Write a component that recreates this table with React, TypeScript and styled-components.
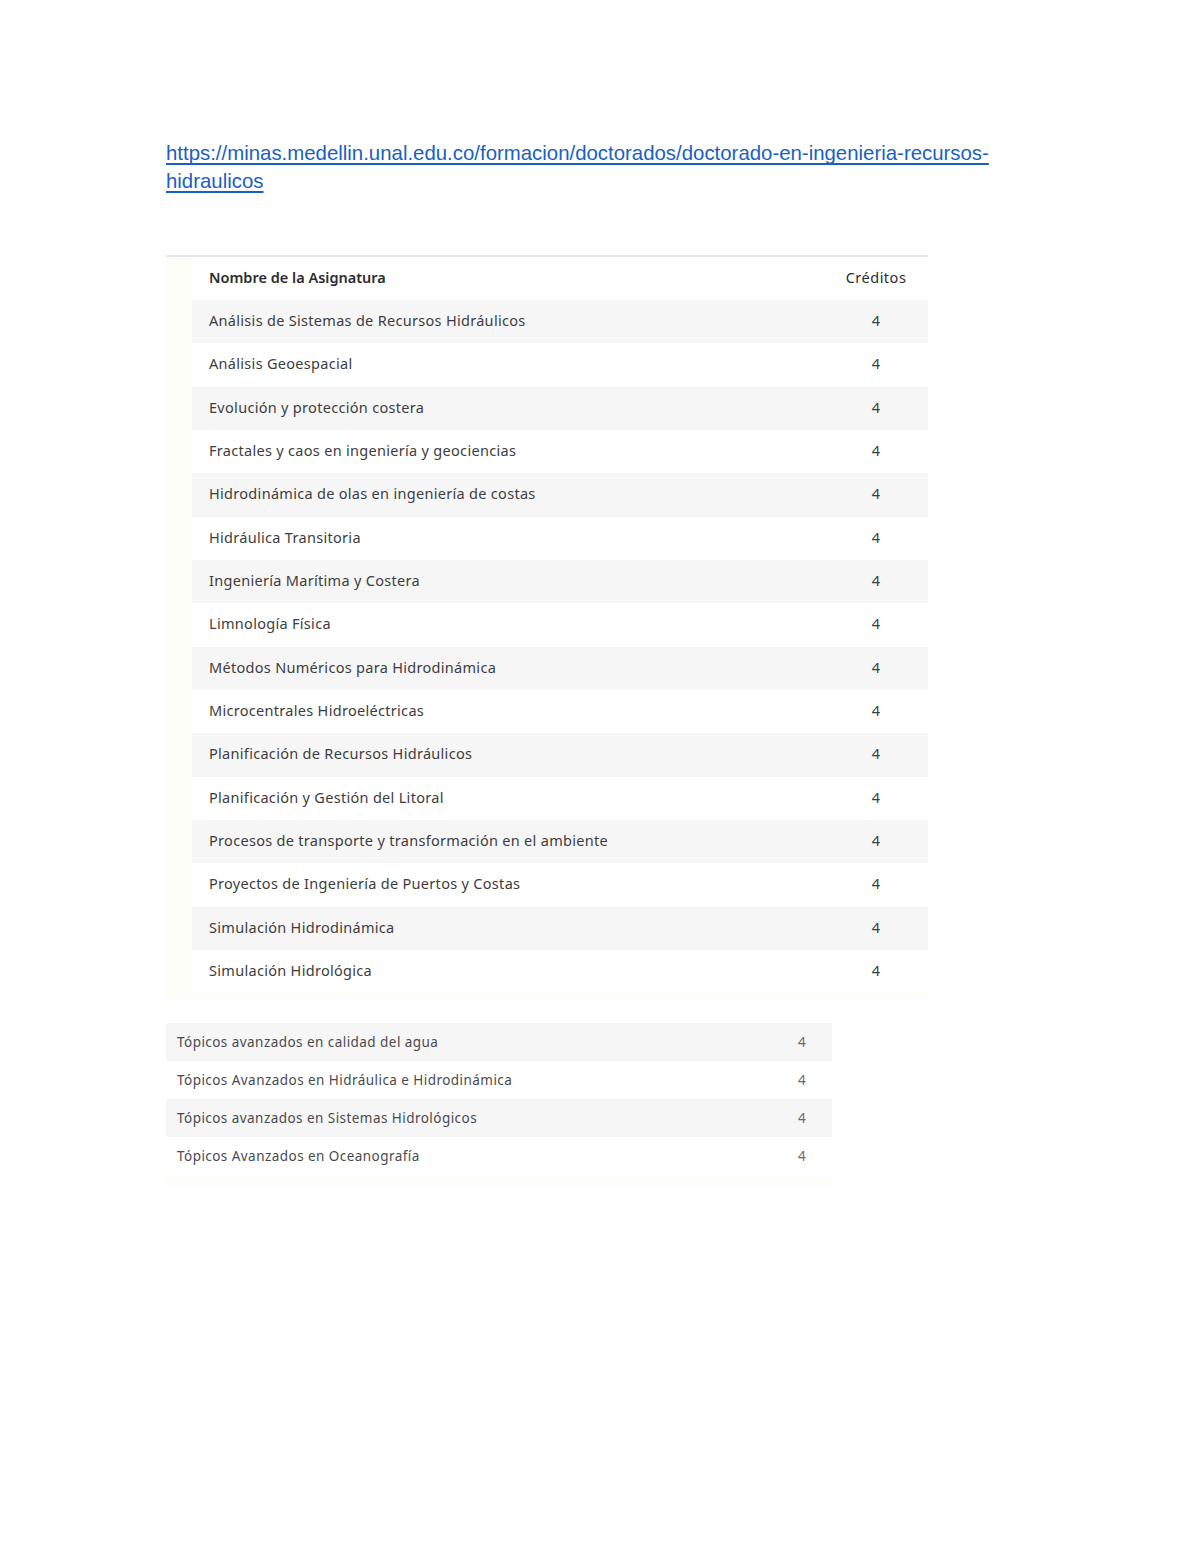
import React from "react";
import styled, { createGlobalStyle } from "styled-components";

const GlobalStyle = createGlobalStyle`
  html, body {
    margin: 0;
    padding: 0;
    background: #ffffff;
  }
`;

const mainCourses = [
  "Análisis de Sistemas de Recursos Hidráulicos",
  "Análisis Geoespacial",
  "Evolución y protección costera",
  "Fractales y caos en ingeniería y geociencias",
  "Hidrodinámica de olas en ingeniería de costas",
  "Hidráulica Transitoria",
  "Ingeniería Marítima y Costera",
  "Limnología Física",
  "Métodos Numéricos para Hidrodinámica",
  "Microcentrales Hidroeléctricas",
  "Planificación de Recursos Hidráulicos",
  "Planificación y Gestión del Litoral",
  "Procesos de transporte y transformación en el ambiente",
  "Proyectos de Ingeniería de Puertos y Costas",
  "Simulación Hidrodinámica",
  "Simulación Hidrológica",
];

const topics = [
  "Tópicos avanzados en calidad del agua",
  "Tópicos Avanzados en Hidráulica e Hidrodinámica",
  "Tópicos avanzados en Sistemas Hidrológicos",
  "Tópicos Avanzados en Oceanografía",
];

const App = () => {
  return (
    <Page>
      <GlobalStyle />
      <Link href="https://minas.medellin.unal.edu.co/formacion/doctorados/doctorado-en-ingenieria-recursos-hidraulicos">
        https://minas.medellin.unal.edu.co/formacion/doctorados/doctorado-en-ingenieria-recursos-
        <br />
        hidraulicos
      </Link>

      <MainTable>
        <Strip />
        <Rows>
          <HeaderRow>
            <Name>Nombre de la Asignatura</Name>
            <HeadCredits>Créditos</HeadCredits>
          </HeaderRow>
          {mainCourses.map((course, i) => (
            <Row key={course} striped={i % 2 === 0}>
              <Name>{course}</Name>
              <Credits>4</Credits>
            </Row>
          ))}
        </Rows>
      </MainTable>

      <TopicTable>
        {topics.map((topic, i) => (
          <TopicRow key={topic} striped={i % 2 === 0}>
            <TopicName>{topic}</TopicName>
            <TopicCredits>4</TopicCredits>
          </TopicRow>
        ))}
        <TopicFoot />
      </TopicTable>
    </Page>
  );
};

export default App;

const Page = styled.div`
  width: 1200px;
  min-height: 1553px;
  box-sizing: border-box;
  padding: 139px 0 0 166px;
  font-family: "Noto Sans", "Open Sans", sans-serif;
`;

const Link = styled.a`
  display: block;
  width: 900px;
  font-family: "Liberation Sans", Arial, sans-serif;
  font-size: 20.4px;
  line-height: 28px;
  color: #1a5fc4;
  text-decoration: underline;
  text-decoration-skip-ink: none;
  text-underline-offset: 3px;
`;

const MainTable = styled.div`
  display: flex;
  width: 762px;
  margin-top: 60px;
  border-top: 2px solid #e6e6ea;
  background: #fefef8;
`;

const Strip = styled.div`
  width: 26px;
  flex-shrink: 0;
`;

const Rows = styled.div`
  flex: 1;
  display: flex;
  flex-direction: column;
  padding-bottom: 7px;
`;

const Row = styled.div<{ striped?: boolean }>`
  display: flex;
  align-items: center;
  box-sizing: border-box;
  height: 43.33px;
  padding: 0 0 3px 17px;
  background: ${({ striped }) => (striped ? "#f6f6f6" : "#ffffff")};
  color: #3d3d40;
  font-size: 14.5px;
  letter-spacing: 0.3px;
`;

const HeaderRow = styled(Row)`
  height: 43px;
  background: #ffffff;
  font-weight: 600;
  color: #2c2c30;
  letter-spacing: 0;
`;

const Name = styled.span`
  flex: 1;
`;

const Credits = styled.span`
  width: 66px;
  margin-right: 19px;
  text-align: center;
`;

const HeadCredits = styled(Credits)`
  font-weight: 400;
  letter-spacing: 0.5px;
`;

const TopicTable = styled.div`
  display: flex;
  flex-direction: column;
  width: 666px;
  margin-top: 23px;
  background: #fefef8;
`;

const TopicRow = styled.div<{ striped?: boolean }>`
  display: flex;
  align-items: center;
  box-sizing: border-box;
  height: 38px;
  padding: 0 0 0 11px;
  background: ${({ striped }) => (striped ? "#f6f6f6" : "#ffffff")};
  color: #4a4a4e;
  font-size: 13.5px;
  letter-spacing: 0.45px;
`;

const TopicName = styled.span`
  flex: 1;
`;

const TopicCredits = styled.span`
  width: 20px;
  margin-right: 20px;
  text-align: center;
  color: #6a6a6e;
`;

const TopicFoot = styled.div`
  height: 11px;
`;
